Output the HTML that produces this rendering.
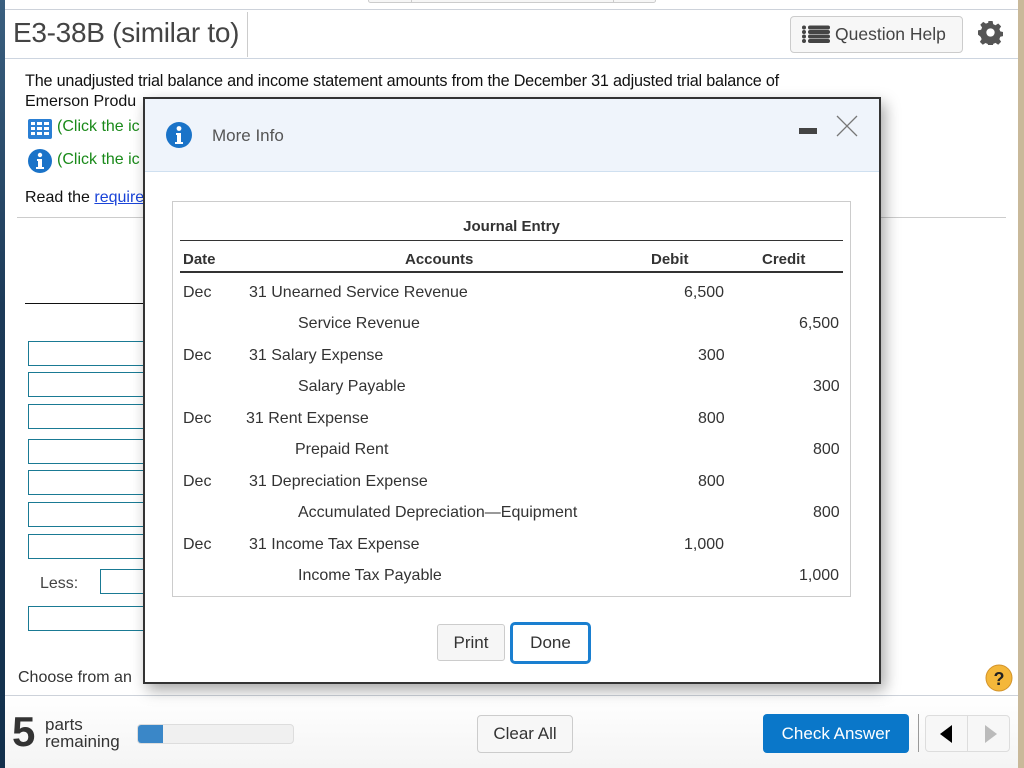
<!DOCTYPE html>
<html><head><meta charset="utf-8"><style>
*{margin:0;padding:0;box-sizing:border-box}
body{width:1024px;height:768px;overflow:hidden;position:relative;background:#fff;font-family:"Liberation Sans",Arial,sans-serif;color:#222}
.a{position:absolute}
.inp{position:absolute;left:28px;width:130px;height:25px;border:1px solid #1a7a94;background:#fff}
.t{position:absolute;font-size:16px;color:#333;white-space:nowrap}
</style></head><body>
<div class="a" style="left:0;top:0;width:5px;height:768px;background:linear-gradient(#3a5f7f,#1c3a58 40%,#12304c)"></div>
<div class="a" style="left:1018px;top:0;width:6px;height:768px;background:#c9b99a"></div>
<div class="a" style="left:5px;top:9px;width:1013px;height:1px;background:#cdd2da"></div>
<div class="a" style="left:368px;top:-2px;width:288px;height:5px;border:1px solid #ccc;border-radius:3px;background:#f6f6f6"></div>
<div class="a" style="left:411px;top:0;width:1px;height:3px;background:#ccc"></div>
<div class="a" style="left:613px;top:0;width:1px;height:3px;background:#ccc"></div>
<div class="a" style="left:13px;top:17px;font-size:28px;color:#444;letter-spacing:-0.3px">E3-38B (similar to)</div>
<div class="a" style="left:247px;top:12px;width:1px;height:45px;background:#ccc"></div>
<div class="a" style="left:790px;top:16px;width:173px;height:37px;border:1px solid #ccc;border-radius:4px;background:#f7f7f7"></div>
<svg class="a" style="left:801px;top:25px" width="30" height="18" viewBox="0 0 30 18"><g fill="#444"><circle cx="3" cy="2.5" r="2"/><circle cx="3" cy="7" r="2"/><circle cx="3" cy="11.5" r="2"/><circle cx="3" cy="16" r="2"/><rect x="7" y="0.5" width="22" height="4" rx="2"/><rect x="7" y="5" width="22" height="4" rx="2"/><rect x="7" y="9.5" width="22" height="4" rx="2"/><rect x="7" y="14" width="22" height="4" rx="2"/></g></svg>
<div class="a" style="left:835px;top:24px;font-size:17.5px;color:#444">Question Help</div>
<svg class="a" style="left:978px;top:20px" width="25" height="25" viewBox="0 0 24 24"><path fill="#555" d="M10 1h4l.6 3 2.2 1 2.6-1.7 2.8 2.8L20.5 8.7l.9 2.2 2.6.6v4l-2.6.6-.9 2.2 1.7 2.6-2.8 2.8-2.6-1.7-2.2.9-.6 3.1h-4l-.6-3-2.2-.9-2.6 1.7-2.8-2.8 1.7-2.6-.9-2.2L0 14v-4l3-.6.9-2.2L2.2 4.6 5 1.8l2.6 1.7 2.2-.9zM12 8a4 4 0 100 8 4 4 0 000-8z"/></svg>
<div class="a" style="left:5px;top:58px;width:1013px;height:1px;background:#cdd5e0"></div>
<div class="t" style="left:25px;top:72px;font-size:16.2px;color:#111;letter-spacing:-0.2px">The unadjusted trial balance and income statement amounts from the December 31 adjusted trial balance of</div>
<div class="t" style="left:25px;top:93px;font-size:16px;color:#111">Emerson Produ</div>
<svg class="a" style="left:28px;top:119px" width="24" height="20"><rect width="24" height="20" rx="2" fill="#2a7fd4"/><g fill="#fff"><rect x="3" y="3" width="4" height="3"/><rect x="9" y="3" width="5" height="3"/><rect x="16" y="3" width="5" height="3"/><rect x="3" y="8" width="4" height="3"/><rect x="9" y="8" width="5" height="3"/><rect x="16" y="8" width="5" height="3"/><rect x="3" y="13" width="4" height="3"/><rect x="9" y="13" width="5" height="3"/><rect x="16" y="13" width="5" height="3"/></g></svg>
<div class="t" style="left:57px;top:118px;color:#1a8a1a">(Click the ic</div>
<svg class="a" style="left:28px;top:149px" width="24" height="24"><circle cx="12" cy="12" r="12" fill="#1a73c8"/><circle cx="12" cy="6" r="2.2" fill="#fff"/><path d="M9 10h5v8h2v2H8v-2h2v-6H9z" fill="#fff"/></svg>
<div class="t" style="left:57px;top:151px;color:#1a8a1a">(Click the ic</div>
<div class="t" style="left:25px;top:189px;font-size:16px;color:#111">Read the <span style="color:#1a44d8;text-decoration:underline">require</span></div>
<div class="a" style="left:17px;top:217px;width:989px;height:1px;background:#ccc"></div>
<div class="a" style="left:25px;top:303px;width:130px;height:1px;background:#111"></div>
<div class="inp" style="top:341px"></div>
<div class="inp" style="top:372px"></div>
<div class="inp" style="top:404px"></div>
<div class="inp" style="top:439px"></div>
<div class="inp" style="top:470px"></div>
<div class="inp" style="top:502px"></div>
<div class="inp" style="top:534px"></div>
<div class="t" style="left:40px;top:575px;color:#444">Less:</div>
<div class="inp" style="left:100px;top:569px;width:60px"></div>
<div class="inp" style="top:606px"></div>
<div class="t" style="left:18px;top:669px;color:#333">Choose from an</div>
<svg class="a" style="left:985px;top:664px" width="28" height="28"><circle cx="14" cy="14" r="13" fill="#f4b73a" stroke="#d3932a"/><text x="14" y="21" text-anchor="middle" font-family="Liberation Sans" font-weight="bold" font-size="18" fill="#222">?</text></svg>
<div class="a" style="left:5px;top:695px;width:1013px;height:73px;background:linear-gradient(#fff,#f4f4f4);border-top:1px solid #cdd2da"></div>
<div class="a" style="left:12px;top:708px;font-size:42px;font-weight:bold;color:#333;line-height:48px">5</div>
<div class="a" style="left:45px;top:716px;font-size:17px;color:#333;line-height:17px">parts<br>remaining</div>
<div class="a" style="left:137px;top:724px;width:157px;height:20px;border:1px solid #ddd;border-radius:4px;background:#f0f0f0;overflow:hidden"><div style="width:25px;height:100%;background:#3a87c8"></div></div>
<div class="a" style="left:477px;top:715px;width:96px;height:38px;border:1px solid #ccc;border-radius:4px;background:#f7f7f7;font-size:17px;color:#333;text-align:center;line-height:36px">Clear All</div>
<div class="a" style="left:763px;top:714px;width:146px;height:39px;border-radius:4px;background:#0a77c9;font-size:17px;color:#fff;text-align:center;line-height:39px">Check Answer</div>
<div class="a" style="left:918px;top:714px;width:1px;height:38px;background:#999"></div>
<div class="a" style="left:925px;top:715px;width:85px;height:37px;border:1px solid #ddd;border-radius:4px;background:#f7f7f7"></div>
<div class="a" style="left:967px;top:715px;width:1px;height:37px;background:#ddd"></div>
<svg class="a" style="left:940px;top:725px" width="14" height="18"><path d="M12 0v18L0 9z" fill="#000"/></svg>
<svg class="a" style="left:983px;top:725px" width="14" height="18"><path d="M2 0v18L14 9z" fill="#bbb"/></svg>
<div class="a" style="left:143px;top:97px;width:738px;height:587px;border:2px solid #333;background:#fff;box-shadow:4px 6px 14px rgba(0,0,0,.35)"></div>
<div class="a" style="left:145px;top:99px;width:734px;height:73px;background:#eff4fb;border-bottom:1px solid #cfe0f0"></div>
<svg class="a" style="left:166px;top:122px" width="26" height="26"><circle cx="13" cy="13" r="13" fill="#1a73c8"/><circle cx="13" cy="6.5" r="2.4" fill="#fff"/><path d="M10 11h5v9h2v2H9v-2h2v-7h-1z" fill="#fff"/></svg>
<div class="t" style="left:212px;top:126px;font-size:17px;color:#555">More Info</div>
<div class="a" style="left:799px;top:128px;width:18px;height:6px;background:#444"></div>
<svg class="a" style="left:836px;top:115px" width="22" height="22"><path d="M1 1l20 20M21 1L1 21" stroke="#777" stroke-width="1.3"/></svg>
<div class="a" style="left:172px;top:201px;width:679px;height:396px;border:1px solid #ccc"></div>
<div class="t" style="left:180px;top:218px;width:663px;text-align:center;font-weight:bold;font-size:15px">Journal Entry</div>
<div class="a" style="left:180px;top:240px;width:663px;height:1px;background:#333"></div>
<div class="t" style="left:183px;top:251px;font-weight:bold;font-size:15px">Date</div>
<div class="t" style="left:405px;top:251px;font-weight:bold;font-size:15px">Accounts</div>
<div class="t" style="left:651px;top:251px;font-weight:bold;font-size:15px">Debit</div>
<div class="t" style="left:762px;top:251px;font-weight:bold;font-size:15px">Credit</div>
<div class="a" style="left:180px;top:271px;width:663px;height:2px;background:#333"></div>
<div class="t" style="left:183px;top:284px">Dec</div><div class="t" style="left:249px;top:284px">31 Unearned Service Revenue</div><div class="t" style="left:684px;top:284px">6,500</div>
<div class="t" style="left:298px;top:315px">Service Revenue</div><div class="t" style="left:799px;top:315px">6,500</div>
<div class="t" style="left:183px;top:347px">Dec</div><div class="t" style="left:249px;top:347px">31 Salary Expense</div><div class="t" style="left:698px;top:347px">300</div>
<div class="t" style="left:298px;top:378px">Salary Payable</div><div class="t" style="left:813px;top:378px">300</div>
<div class="t" style="left:183px;top:410px">Dec</div><div class="t" style="left:246px;top:410px">31 Rent Expense</div><div class="t" style="left:698px;top:410px">800</div>
<div class="t" style="left:295px;top:441px">Prepaid Rent</div><div class="t" style="left:813px;top:441px">800</div>
<div class="t" style="left:183px;top:473px">Dec</div><div class="t" style="left:249px;top:473px">31 Depreciation Expense</div><div class="t" style="left:698px;top:473px">800</div>
<div class="t" style="left:298px;top:504px">Accumulated Depreciation—Equipment</div><div class="t" style="left:813px;top:504px">800</div>
<div class="t" style="left:183px;top:536px">Dec</div><div class="t" style="left:249px;top:536px">31 Income Tax Expense</div><div class="t" style="left:684px;top:536px">1,000</div>
<div class="t" style="left:298px;top:567px">Income Tax Payable</div><div class="t" style="left:799px;top:567px">1,000</div>
<div class="a" style="left:437px;top:624px;width:68px;height:37px;border:1px solid #ccc;border-radius:3px;background:#f6f6f6;font-size:17px;color:#333;text-align:center;line-height:35px">Print</div>
<div class="a" style="left:510px;top:622px;width:81px;height:42px;border:3px solid #1a7fd0;border-radius:5px;background:#fff;font-size:17px;color:#333;text-align:center;line-height:36px">Done</div>
</body></html>
